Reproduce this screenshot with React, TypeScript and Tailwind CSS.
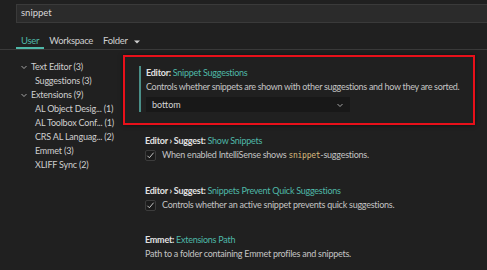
import React from 'react';

const font = { fontFamily: 'Lato, "Open Sans", sans-serif' };

function Check() {
  return (
    <span className="flex h-[11px] w-[11px] shrink-0 items-center justify-center rounded-[2px] border border-[#3c3c3c] bg-[#1b1b1b]">
      <svg width="9" height="9" viewBox="0 0 16 16" fill="none" stroke="#d4d4d4" strokeWidth="1.6">
        <path d="M2.5 8.5l3.5 3.5 7.5-9" />
      </svg>
    </span>
  );
}

function Title({ prefix, name }: { prefix: string; name: string }) {
  return (
    <div className="whitespace-nowrap text-[9px] leading-[14px] tracking-[-0.25px]">
      <span className="font-bold text-[#e2e2e2]">{prefix}</span>
      <span className="text-[#4fb8a8]">{name}</span>
    </div>
  );
}

function TreeRow({ label, indent, chevron }: { label: string; indent: boolean; chevron?: boolean }) {
  return (
    <div className={`flex h-[14px] items-center whitespace-nowrap text-[9px] tracking-[-0.2px] text-[#cfcfcf] ${indent ? 'pl-[35px]' : 'pl-[20px]'}`}>
      {chevron && (
        <svg width="8" height="8" viewBox="0 0 16 16" fill="none" stroke="#c5c5c5" strokeWidth="1.6" className="mr-[3px]">
          <path d="M3 6l5 5 5-5" />
        </svg>
      )}
      <span>{label}</span>
    </div>
  );
}

export default function App() {
  return (
    <div className="h-[270px] w-[487px] overflow-hidden bg-[#202020] text-[#cccccc]" style={font}>
      <div className="pl-[16px] pt-[4px]">
        <div className="flex h-[19px] items-center border border-[#3a3a3a] border-r-0 bg-[#2b2b2b] pl-[4px] text-[9.5px] text-[#d8d8d8]">
          snippet
        </div>
      </div>
      <div className="flex h-[27px] items-end border-b border-[#3a3a3a] pl-[16px]">
        <div className="flex h-[17px] items-start text-[9.5px] tracking-[-0.3px]">
          <div className="h-full border-b-2 border-[#4fb8a8] px-[5px] pt-[2px] text-[#4fb8a8]">User</div>
          <div className="px-[5px] pt-[2px] text-[#cfcfcf]">Workspace</div>
          <div className="flex items-center px-[5px] pt-[2px] text-[#cfcfcf]">
            Folder
            <svg width="8" height="8" viewBox="0 0 16 16" className="ml-[5px] mt-[2px]">
              <path d="M2 5h12l-6 6z" fill="#cfcfcf" />
            </svg>
          </div>
        </div>
      </div>
      <div className="flex">
        <div className="w-[123px] shrink-0 pt-[10px]">
          <TreeRow label="Text Editor (3)" indent={false} chevron />
          <TreeRow label="Suggestions (3)" indent />
          <TreeRow label="Extensions (9)" indent={false} chevron />
          <TreeRow label="AL Object Desig...  (1)" indent />
          <TreeRow label="AL Toolbox Conf...  (1)" indent />
          <TreeRow label="CRS AL Languag...  (2)" indent />
          <TreeRow label="Emmet (3)" indent />
          <TreeRow label="XLIFF Sync (2)" indent />
        </div>
        <div className="flex-1 pt-[5px]">
          <div className="mr-[16px] border-2 border-[#e8101a] pb-[11px] pl-[14px] pr-[14px] pt-[9px] shadow-[0_0_4px_rgba(0,0,0,0.6)]">
            <div className="border-l-2 border-[#4a8f88] pl-[5px]">
              <Title prefix="Editor: " name="Snippet Suggestions" />
              <div className="whitespace-nowrap text-[9px] leading-[14px] tracking-[-0.3px] text-[#c4c4c4]">
                Controls whether snippets are shown with other suggestions and how they are sorted.
              </div>
              <div className="mt-[3px] flex h-[15px] w-[204px] items-center justify-between bg-[#181818] pl-[6px] pr-[6px] text-[9px] text-[#d4d4d4]">
                <span>bottom</span>
                <svg width="8" height="8" viewBox="0 0 16 16" fill="none" stroke="#c5c5c5" strokeWidth="1.6">
                  <path d="M3 6l5 5 5-5" />
                </svg>
              </div>
            </div>
          </div>
          <div className="pl-[22px] pt-[9px]">
            <div>
              <Title prefix="Editor › Suggest: " name="Show Snippets" />
              <div className="flex items-center gap-[6px] whitespace-nowrap text-[9px] leading-[14px] tracking-[-0.25px] text-[#c4c4c4]">
                <Check />
                <span>
                  When enabled IntelliSense shows{' '}
                  <span className="text-[#d7ba7d]" style={{ fontFamily: '"DejaVu Sans Mono", monospace', fontSize: '8px' }}>snippet</span>
                  -suggestions.
                </span>
              </div>
            </div>
            <div className="mt-[21px]">
              <Title prefix="Editor › Suggest: " name="Snippets Prevent Quick Suggestions" />
              <div className="flex items-center gap-[6px] whitespace-nowrap text-[9px] leading-[14px] tracking-[-0.25px] text-[#c4c4c4]">
                <Check />
                <span>Controls whether an active snippet prevents quick suggestions.</span>
              </div>
            </div>
            <div className="mt-[21px]">
              <Title prefix="Emmet: " name="Extensions Path" />
              <div className="whitespace-nowrap text-[9px] leading-[14px] tracking-[-0.25px] text-[#c4c4c4]">
                Path to a folder containing Emmet profiles and snippets.
              </div>
            </div>
            <div className="mt-[6px]">
              <Title prefix="Editor: " name="Word Based Suggestions" />
            </div>
          </div>
        </div>
      </div>
    </div>
  );
}
